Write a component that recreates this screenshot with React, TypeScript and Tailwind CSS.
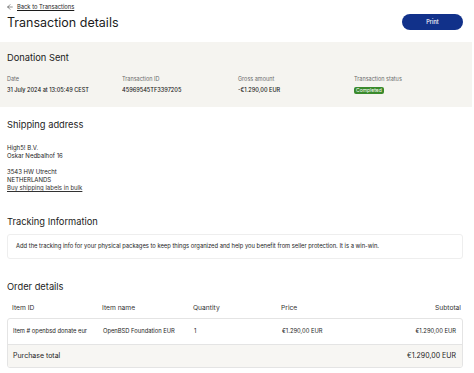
import { ArrowLeft } from "lucide-react"

const summary = [
  { label: "Date", value: "31 July 2024 at 13:05:49 CEST" },
  { label: "Transaction ID", value: "45969545TF3397205" },
  { label: "Gross amount", value: "-€1.290,00 EUR" },
]

export default function App() {
  return (
    <div className="w-[474px] h-[373px] overflow-hidden bg-white text-[#1c1c1c] font-['Inter',sans-serif]">
      {/* header */}
      <div className="flex items-end justify-between pl-[7px] pr-[11px] pt-[3px]">
        <div>
          <a href="#" className="flex items-center gap-[3px] text-[5.8px] leading-[8px] text-[#1c1c1c] underline">
            <ArrowLeft size={8} strokeWidth={1.5} className="-ml-[1px]" />
            Back to Transactions
          </a>
          <h1 className="mt-[2px] text-[12.5px] leading-[20px] font-normal">Transaction details</h1>
        </div>
        <button
          type="button"
          className="mb-[3px] w-[61px] h-[16px] rounded-full bg-[#11318a] text-white text-[5.5px] font-medium"
        >
          Print
        </button>
      </div>

      {/* summary band */}
      <section className="mt-[9px] mr-[2px] h-[65px] bg-[#f5f4f0] px-[7px] pt-[9px]">
        <h2 className="text-[9.3px] leading-[14px]">Donation Sent</h2>
        <div className="mt-[10px] grid grid-cols-[115px_116px_116px_1fr]">
          {summary.map((s) => (
            <div key={s.label}>
              <div className="text-[5.5px] leading-[8px] text-[#6b6b6b]">{s.label}</div>
              <div className="mt-[3px] text-[5.6px] leading-[8px] font-medium">{s.value}</div>
            </div>
          ))}
          <div>
            <div className="text-[5.5px] leading-[8px] text-[#6b6b6b]">Transaction status</div>
            <span className="mt-[4px] block w-fit rounded-[2px] bg-[#3a8a2c] px-[2px] text-[5px] leading-[7px] text-white">
              Completed
            </span>
          </div>
        </div>
      </section>

      {/* shipping */}
      <section className="px-[7px] pt-[11px]">
        <h2 className="text-[9.3px] leading-[14px]">Shipping address</h2>
        <div className="mt-[12px] text-[6px] leading-[8px]">
          <div>High5! B.V.</div>
          <div>Oskar Nedbalhof 16</div>
          <div className="mt-[8px]">3543 HW Utrecht</div>
          <div>NETHERLANDS</div>
          <a href="#" className="underline text-[#333]">Buy shipping labels in bulk</a>
        </div>
      </section>

      {/* tracking */}
      <section className="px-[7px] pt-[23px]">
        <h2 className="text-[9.3px] leading-[14px]">Tracking Information</h2>
        <div className="mt-[5px] mr-[4px] h-[25px] flex items-center rounded-[3px] border border-[#eeeeee] px-[8px] text-[5.8px]">
          Add the tracking info for your physical packages to keep things organized and help you benefit from seller protection. It is a win-win.
        </div>
      </section>

      {/* order */}
      <section className="px-[7px] pt-[21px]">
        <h2 className="text-[9.3px] leading-[14px]">Order details</h2>
        <div className="mt-[4px] grid grid-cols-[90px_91px_88px_1fr_70px] pl-[5px] pr-[6px] h-[20px] items-center text-[6.7px] text-[#333]">
          <span>Item ID</span>
          <span>Item name</span>
          <span>Quantity</span>
          <span>Price</span>
          <span className="text-right">Subtotal</span>
        </div>
        <div className="mr-[4px] rounded-[3px] border border-[#e4e4e4] overflow-hidden">
          <div className="grid grid-cols-[90px_91px_88px_1fr_70px] pl-[5px] pr-[6px] h-[25px] items-center text-[5.8px]">
            <span>Item # openbsd donate eur</span>
            <span>OpenBSD Foundation EUR</span>
            <span>1</span>
            <span>€1.290,00 EUR</span>
            <span className="text-right">€1.290,00 EUR</span>
          </div>
          <div className="flex justify-between items-center h-[23px] pl-[5px] pr-[6px] border-t border-[#e4e4e4] bg-[#f7f6f3] text-[7px]">
            <span>Purchase total</span>
            <span>€1.290,00 EUR</span>
          </div>
        </div>
      </section>
    </div>
  )
}
